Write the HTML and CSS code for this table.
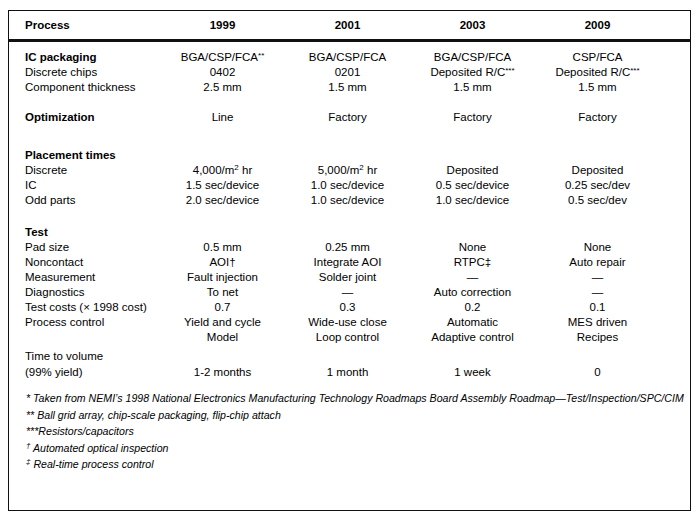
FILE: index.html
```html
<!DOCTYPE html>
<html>
<head>
<meta charset="utf-8">
<link rel="stylesheet" href="styles.css">
</head>
<body>
<div class="frame">
  <table class="roadmap">
    <colgroup>
      <col class="c-label"><col class="c-year"><col class="c-year"><col class="c-year"><col class="c-year"><col class="c-rest">
    </colgroup>
    <thead>
      <tr class="head">
        <th class="label">Process</th><th>1999</th><th>2001</th><th>2003</th><th>2009</th><th></th>
      </tr>
    </thead>
    <tbody>
      <tr class="first"><td class="label group">IC packaging</td><td>BGA/CSP/FCA<span class="mark">**</span></td><td>BGA/CSP/FCA</td><td>BGA/CSP/FCA</td><td>CSP/FCA</td><td></td></tr>
      <tr><td class="label">Discrete chips</td><td>0402</td><td>0201</td><td>Deposited R/C<span class="mark">***</span></td><td>Deposited R/C<span class="mark">***</span></td><td></td></tr>
      <tr><td class="label">Component thickness</td><td>2.5 mm</td><td>1.5 mm</td><td>1.5 mm</td><td>1.5 mm</td><td></td></tr>
      <tr class="gap"><td colspan="6"></td></tr>
      <tr><td class="label group">Optimization</td><td>Line</td><td>Factory</td><td>Factory</td><td>Factory</td><td></td></tr>
      <tr class="gap wide"><td colspan="6"></td></tr>
      <tr><td class="label group">Placement times</td><td></td><td></td><td></td><td></td><td></td></tr>
      <tr><td class="label">Discrete</td><td>4,000/m<sup>2</sup> hr</td><td>5,000/m<sup>2</sup> hr</td><td>Deposited</td><td>Deposited</td><td></td></tr>
      <tr><td class="label">IC</td><td>1.5 sec/device</td><td>1.0 sec/device</td><td>0.5 sec/device</td><td>0.25 sec/dev</td><td></td></tr>
      <tr><td class="label">Odd parts</td><td>2.0 sec/device</td><td>1.0 sec/device</td><td>1.0 sec/device</td><td>0.5 sec/dev</td><td></td></tr>
      <tr class="gap mid"><td colspan="6"></td></tr>
      <tr><td class="label group">Test</td><td></td><td></td><td></td><td></td><td></td></tr>
      <tr><td class="label">Pad size</td><td>0.5 mm</td><td>0.25 mm</td><td>None</td><td>None</td><td></td></tr>
      <tr><td class="label">Noncontact</td><td>AOI†</td><td>Integrate AOI</td><td>RTPC‡</td><td>Auto repair</td><td></td></tr>
      <tr><td class="label">Measurement</td><td>Fault injection</td><td>Solder joint</td><td>—</td><td>—</td><td></td></tr>
      <tr><td class="label">Diagnostics</td><td>To net</td><td>—</td><td>Auto correction</td><td>—</td><td></td></tr>
      <tr><td class="label">Test costs (× 1998 cost)</td><td>0.7</td><td>0.3</td><td>0.2</td><td>0.1</td><td></td></tr>
      <tr><td class="label">Process control</td><td>Yield and cycle</td><td>Wide-use close</td><td>Automatic</td><td>MES driven</td><td></td></tr>
      <tr><td class="label"></td><td>Model</td><td>Loop control</td><td>Adaptive control</td><td>Recipes</td><td></td></tr>
      <tr class="tall"><td class="label">Time to volume</td><td></td><td></td><td></td><td></td><td></td></tr>
      <tr class="yield"><td class="label">(99% yield)</td><td>1-2 months</td><td>1 month</td><td>1 week</td><td>0</td><td></td></tr>
    </tbody>
  </table>
  <ul class="notes">
    <li>* Taken from NEMI’s 1998 National Electronics Manufacturing Technology Roadmaps Board Assembly Roadmap—Test/Inspection/SPC/CIM</li>
    <li>** Ball grid array, chip-scale packaging, flip-chip attach</li>
    <li>***Resistors/capacitors</li>
    <li><sup>†</sup> Automated optical inspection</li>
    <li><sup>‡</sup> Real-time process control</li>
  </ul>
</div>
</body>
</html>
```

FILE: styles.css
```css
html, body {
  margin: 0;
  padding: 0;
  background: #ffffff;
}

body {
  padding: 10px 0 0 8px;
  font-family: "Liberation Sans", Arial, sans-serif;
  color: #000000;
}

.frame {
  box-sizing: border-box;
  width: 683px;
  height: 501px;
  border: 1.5px solid #111111;
}

.roadmap {
  border-collapse: collapse;
  table-layout: fixed;
  width: 100%;
  font-size: 11.5px;
}

.c-label { width: 151px; }
.c-year { width: 125px; }
.c-rest { width: auto; }

.roadmap th,
.roadmap td {
  padding: 0;
  text-align: center;
  white-space: nowrap;
  height: 15px;
  line-height: 15px;
}

.roadmap .label {
  text-align: left;
  padding-left: 16px;
}

.head th {
  font-weight: bold;
  height: 28px;
  line-height: 28px;
  padding-top: 0;
  border-bottom: 3px solid #111111;
}

.first td {
  padding-top: 8px;
}

.group {
  font-weight: bold;
}

.gap td {
  height: 15px;
}

.gap.wide td {
  height: 23px;
}

.gap.mid td {
  height: 17px;
}

.tall td {
  padding-top: 4px;
}

.yield td {
  padding-top: 1px;
}

.mark {
  font-size: 8px;
  vertical-align: 3px;
  line-height: 0;
}

sup {
  font-size: 8px;
  line-height: 0;
  vertical-align: 4px;
}

.notes {
  list-style: none;
  margin: 10px 0 0 0;
  padding: 0 0 0 17px;
  font-style: italic;
  font-size: 10.6px;
  line-height: 16.6px;
}
```
